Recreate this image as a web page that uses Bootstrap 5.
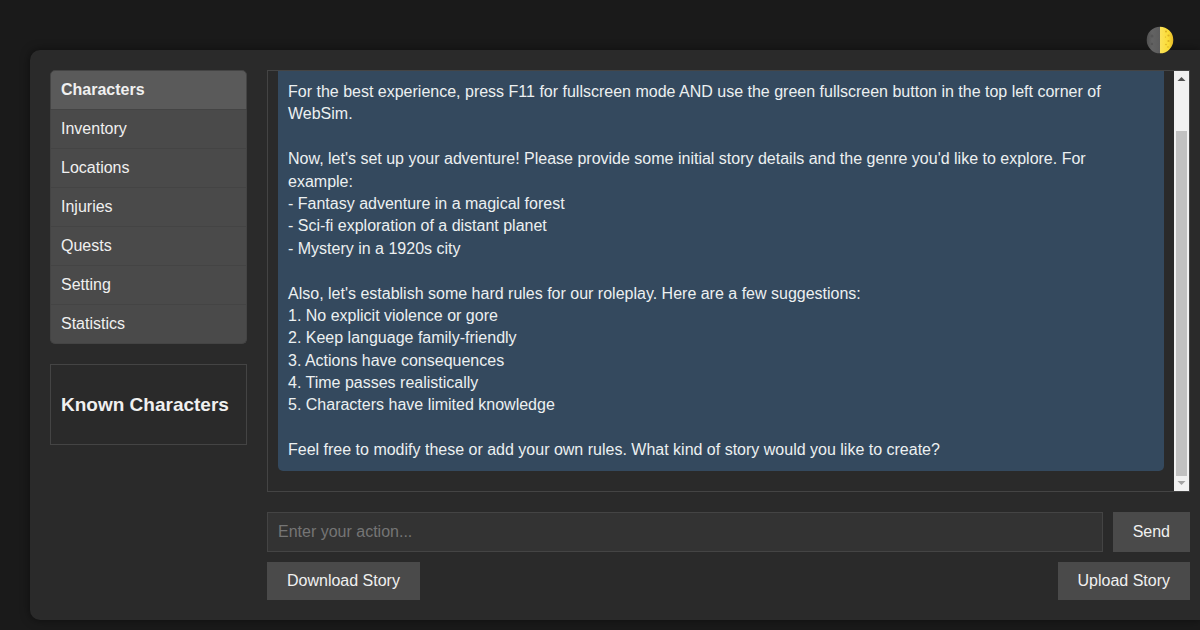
<!DOCTYPE html>
<html lang="en">
<head>
<meta charset="utf-8">
<meta name="viewport" content="width=device-width, initial-scale=1">
<title>Adventure</title>
<link href="https://cdn.jsdelivr.net/npm/bootstrap@5.3.0/dist/css/bootstrap.min.css" rel="stylesheet">
<style>
  body { background: #1a1a1a; color: #f0f0f0; font-family: "Liberation Sans", Arial, sans-serif; font-size: 16px; line-height: 1.4; padding: 50px 0 10px 30px; }
  .theme-toggle { top: 26px; right: 26px; line-height: 0; }
  .panel { background: #2a2a2a; border-radius: 10px 0 0 10px; box-shadow: 0 0 10px rgba(0,0,0,.5); padding: 20px 10px 20px 20px; gap: 20px; }
  .side { width: 197px; gap: 20px; }
  .tabs { --bs-list-group-bg: #4a4a4a; --bs-list-group-color: #f0f0f0; --bs-list-group-border-color: #444; --bs-list-group-border-radius: 5px; --bs-list-group-active-bg: #5a5a5a; --bs-list-group-active-border-color: #444; --bs-list-group-active-color: #f0f0f0; --bs-list-group-action-hover-bg: #555; --bs-list-group-action-hover-color: #fff; --bs-list-group-action-color: #f0f0f0; }
  .tabs .list-group-item { padding: 8px 10px; line-height: 22px; }
  .framed { border: 1px solid #444; }
  .info { padding: 28px 10px; }
  .info h3 { font-size: 19px; line-height: 23px; }
  .chat-log { min-height: 0; padding: 0 10px 20px; }
  .message { background: #34495e; color: #ecf0f1; border-radius: 0 0 5px 5px; padding: 10px 10px 9px; white-space: pre-line; }
  .scroll-track { width: 15px; background: #f1f1f1; line-height: 0; }
  .scroll-thumb { width: 11px; background: #c1c1c1; }
  .scroll-rest { height: 45px; }
  .form-row, .action-stack { gap: 10px; }
  .action-input, .action-input:focus { background: #333; color: #f0f0f0; border: 1px solid #444; border-radius: 0; padding: 8px 10px; height: 40px; line-height: 22px; }
  .action-input::placeholder { color: #757575; }
  .flat { --bs-btn-bg: #4a4a4a; --bs-btn-color: #f0f0f0; --bs-btn-hover-bg: #5a5a5a; --bs-btn-hover-color: #fff; --bs-btn-border-width: 0; --bs-btn-border-radius: 0; --bs-btn-padding-x: 20px; --bs-btn-padding-y: 8px; --bs-btn-line-height: 22px; }
</style>
</head>
<body class="d-flex flex-column min-vh-100">
<button type="button" class="theme-toggle position-absolute border-0 bg-transparent p-0" aria-label="Toggle theme">
  <svg width="28" height="28" viewBox="0 0 28 28" aria-hidden="true">
    <defs>
      <linearGradient id="shade" x1="0" x2="1"><stop offset="0" stop-color="#505050"/><stop offset=".4" stop-color="#636363"/><stop offset="1" stop-color="#5c5c5c"/></linearGradient>
      <linearGradient id="sun" x1="0" x2="1"><stop offset="0" stop-color="#fbe25a"/><stop offset=".65" stop-color="#fadc35"/><stop offset="1" stop-color="#e5b828"/></linearGradient>
    </defs>
    <path d="M14 .7A13.3 13.3 0 0 0 14 27.3Z" fill="url(#shade)"/>
    <path d="M14 .7A13.3 13.3 0 0 1 14 27.3Z" fill="url(#sun)"/>
    <g fill="#565656"><circle cx="6" cy="10" r="1.5"/><circle cx="6" cy="18" r="1.2"/></g>
    <g fill="#dcb024"><circle cx="20" cy="5.500" r="1"/><circle cx="22.5" cy="9.500" r="1.100"/><circle cx="19.500" cy="11" r=".6"/><circle cx="22.5" cy="15" r="1.1"/><circle cx="20" cy="18.500" r=".8"/><circle cx="22" cy="21" r=".8"/></g>
  </svg>
</button>
<div class="panel d-flex flex-grow-1">
  <aside class="side d-flex flex-column flex-shrink-0">
    <nav class="tabs list-group" aria-label="Story details">
      <a href="#characters" class="list-group-item list-group-item-action active fw-bold" aria-current="true">Characters</a>
      <a href="#inventory" class="list-group-item list-group-item-action">Inventory</a>
      <a href="#locations" class="list-group-item list-group-item-action">Locations</a>
      <a href="#injuries" class="list-group-item list-group-item-action">Injuries</a>
      <a href="#quests" class="list-group-item list-group-item-action">Quests</a>
      <a href="#setting" class="list-group-item list-group-item-action">Setting</a>
      <a href="#statistics" class="list-group-item list-group-item-action">Statistics</a>
    </nav>
    <section id="characters" class="info framed"><h3 class="fw-bold m-0">Known Characters</h3></section>
  </aside>
  <main class="d-flex flex-column flex-grow-1">
    <div class="framed d-flex flex-grow-1">
      <div class="chat-log flex-grow-1">
        <div class="message">For the best experience, press F11 for fullscreen mode AND use the green fullscreen button in the top left corner of WebSim.

Now, let's set up your adventure! Please provide some initial story details and the genre you'd like to explore. For example:
- Fantasy adventure in a magical forest
- Sci-fi exploration of a distant planet
- Mystery in a 1920s city

Also, let's establish some hard rules for our roleplay. Here are a few suggestions:
1. No explicit violence or gore
2. Keep language family-friendly
3. Actions have consequences
4. Time passes realistically
5. Characters have limited knowledge

Feel free to modify these or add your own rules. What kind of story would you like to create?</div>
      </div>
      <div class="scroll-track d-flex flex-column align-items-center flex-shrink-0" aria-hidden="true">
        <svg width="15" height="15" viewBox="0 0 15 15"><path d="M3.5 10 7.5 6l4 4Z" fill="#505050"/></svg>
        <div class="scroll-rest"></div>
        <div class="scroll-thumb flex-grow-1"></div>
        <svg width="15" height="15" viewBox="0 0 15 15"><path d="M3.5 5 7.5 9l4-4Z" fill="#a3a3a3"/></svg>
      </div>
    </div>
    <div class="action-stack d-flex flex-column mt-3 pt-1">
      <form class="form-row d-flex">
        <input type="text" class="form-control action-input" placeholder="Enter your action..." aria-label="Enter your action">
        <button type="submit" class="btn flat">Send</button>
      </form>
      <div class="d-flex justify-content-between">
        <button type="button" class="btn flat">Download Story</button>
        <button type="button" class="btn flat">Upload Story</button>
      </div>
    </div>
  </main>
</div>
<script src="https://cdn.jsdelivr.net/npm/bootstrap@5.3.0/dist/js/bootstrap.bundle.min.js"></script>
</body>
</html>
